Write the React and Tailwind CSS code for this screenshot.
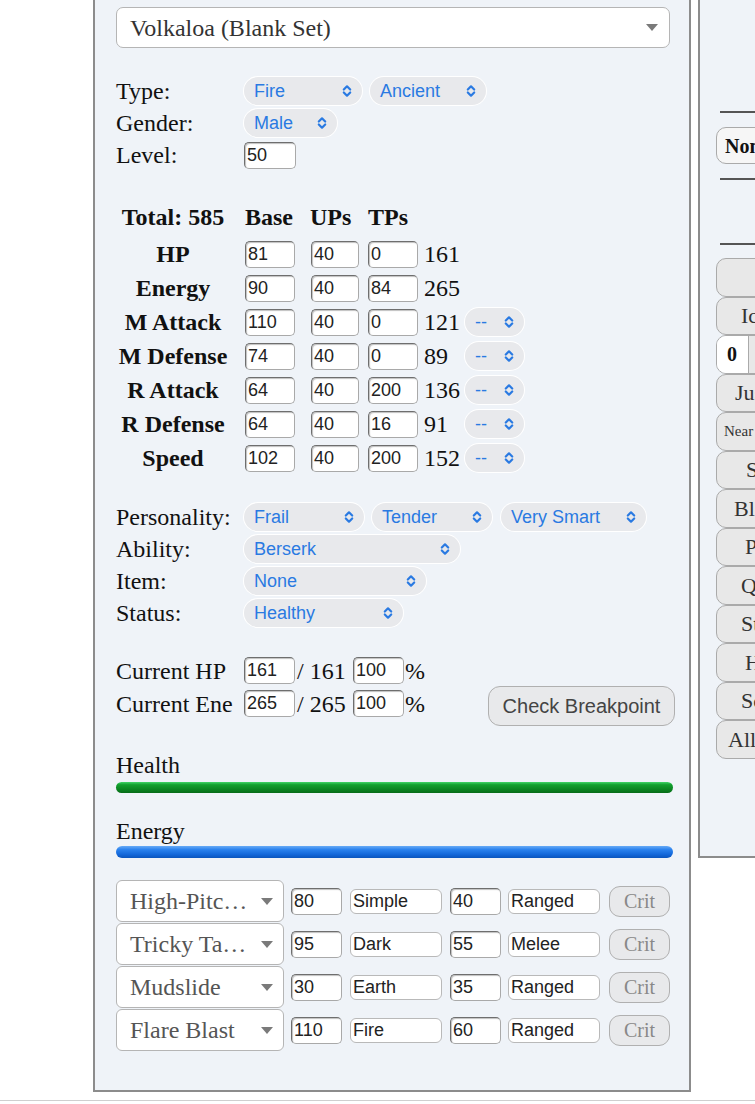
import React from 'react';

// Calculadora: panel del Loomian (izquierda) y panel de campo (derecha, recortado)
const SANS = "font-['Liberation_Sans',Arial,sans-serif]";

function Chev() {
  return (
    <svg width="10" height="14" viewBox="0 0 10 14" fill="none" stroke="#2a7ae2" strokeWidth="2.2" strokeLinecap="round" strokeLinejoin="round">
      <path d="M1.8 5.5 5 2.3 8.2 5.5" />
      <path d="M1.8 8.5 5 11.7 8.2 8.5" />
    </svg>
  );
}

function Pill({ w, children }) {
  return (
    <div className={`${w} h-[28px] shrink-0 rounded-full bg-[#e8e9ec] ring-1 ring-white flex items-center justify-between pl-[10px] pr-[10px] text-[18px] text-[#2a7ae2] ${SANS}`}>
      <span>{children}</span>
      <Chev />
    </div>
  );
}

function Box({ w, v }) {
  return (
    <div className={`${w} h-[27px] shrink-0 bg-white rounded-[5px] border-[1.5px] border-[#6e6e6e] border-r-[#a9a9a9] border-b-[#a9a9a9] shadow-[inset_1px_1px_1px_rgba(0,0,0,0.25)] flex items-center pl-[2px] text-[18px] text-[#222] ${SANS}`}>
      {v}
    </div>
  );
}

function TextBox({ v }) {
  return (
    <div className={`w-[92px] h-[25px] shrink-0 bg-white rounded-[6px] border border-[#b9b9b9] flex items-center pl-[2px] text-[18px] text-[#222] ${SANS}`}>
      {v}
    </div>
  );
}

function Caret() {
  return (
    <svg width="12" height="7" viewBox="0 0 12 7"><path d="M0 0h12L6 7z" fill="#7a7a7a" /></svg>
  );
}

const stats = [
  { n: 'HP', b: 81, u: 40, t: 0, v: 161 },
  { n: 'Energy', b: 90, u: 40, t: 84, v: 265 },
  { n: 'M Attack', b: 110, u: 40, t: 0, v: 121, sel: true },
  { n: 'M Defense', b: 74, u: 40, t: 0, v: 89, sel: true },
  { n: 'R Attack', b: 64, u: 40, t: 200, v: 136, sel: true },
  { n: 'R Defense', b: 64, u: 40, t: 16, v: 91, sel: true },
  { n: 'Speed', b: 102, u: 40, t: 200, v: 152, sel: true },
];

const moves = [
  { n: 'High-Pitc…', bp: 80, tipo: 'Simple', e: 40, cat: 'Ranged' },
  { n: 'Tricky Ta…', bp: 95, tipo: 'Dark', e: 55, cat: 'Melee' },
  { n: 'Mudslide', bp: 30, tipo: 'Earth', e: 35, cat: 'Ranged' },
  { n: 'Flare Blast', bp: 110, tipo: 'Fire', e: 60, cat: 'Ranged' },
];

const campo = [
  { t: '', pl: 'pl-[24px]' },
  { t: 'Ice Wall', pl: 'pl-[24px]' },
  { box: true },
  { t: 'Just Cause', pl: 'pl-[18px]' },
  { t: 'Near Death', pl: 'pl-[7px]', small: true },
  { t: 'Safeguard', pl: 'pl-[29px]' },
  { t: 'Block', pl: 'pl-[17px]' },
  { t: 'Protect', pl: 'pl-[28px]' },
  { t: 'Quick', pl: 'pl-[24px]' },
  { t: 'Stealth', pl: 'pl-[24px]' },
  { t: 'Heal', pl: 'pl-[28px]' },
  { t: 'Screen', pl: 'pl-[24px]' },
  { t: 'Ally', pl: 'pl-[11px]' },
];

export default function App() {
  return (
    <div className="w-[755px] h-[1104px] overflow-hidden bg-white flex flex-col font-['Liberation_Serif',serif] text-[#111]">
      <div className="flex h-[1092px] shrink-0">
        <div className="w-[93px] shrink-0" />

        {/* Panel del Loomian */}
        <div className="w-[598px] shrink-0 h-[1092px] bg-[#eff3f8] border-x-2 border-b-2 border-[#8c8c8c] pl-[21px] pt-[7px]">
          <div className="w-[554px] h-[41px] bg-white rounded-[7px] border border-[#b5b5b5] flex items-center justify-between pl-[13px] pr-[11px] text-[24px] text-[#333]">
            <span>Volkaloa (Blank Set)</span>
            <Caret />
          </div>

          <div className="mt-[27px] text-[24px]">
            <div className="h-[32px] flex items-center">
              <span className="w-[128px] shrink-0">Type:</span>
              <div className="flex gap-[8px]">
                <Pill w="w-[118px]">Fire</Pill>
                <Pill w="w-[116px]">Ancient</Pill>
              </div>
            </div>
            <div className="h-[32px] flex items-center">
              <span className="w-[128px] shrink-0">Gender:</span>
              <Pill w="w-[93px]">Male</Pill>
            </div>
            <div className="h-[32px] flex items-center">
              <span className="w-[128px] shrink-0">Level:</span>
              <Box w="w-[52px]" v="50" />
            </div>
          </div>

          {/* Tabla de stats */}
          <div className="mt-[29px] text-[24px]">
            <div className="h-[34px] flex items-center font-bold">
              <span className="w-[114px] text-center whitespace-nowrap">Total: 585</span>
              <span className="ml-[15px] w-[65px]">Base</span>
              <span className="w-[58px]">UPs</span>
              <span>TPs</span>
            </div>
            <div className="mt-[3px]">
              {stats.map(s => (
                <div key={s.n} className="h-[34px] flex items-center">
                  <span className="w-[114px] shrink-0 text-center font-bold whitespace-nowrap">{s.n}</span>
                  <div className="ml-[15px]"><Box w="w-[50px]" v={s.b} /></div>
                  <div className="ml-[16px]"><Box w="w-[48px]" v={s.u} /></div>
                  <div className="ml-[9px]"><Box w="w-[50px]" v={s.t} /></div>
                  <span className="ml-[6px] w-[41px] shrink-0">{s.v}</span>
                  {s.sel && <Pill w="w-[59px]">--</Pill>}
                </div>
              ))}
            </div>
          </div>

          <div className="mt-[26px] text-[24px]">
            <div className="h-[32px] flex items-center">
              <span className="w-[128px] shrink-0">Personality:</span>
              <div className="flex gap-[8px]">
                <Pill w="w-[120px]">Frail</Pill>
                <Pill w="w-[120px]">Tender</Pill>
                <div className="ml-px"><Pill w="w-[145px]">Very Smart</Pill></div>
              </div>
            </div>
            <div className="h-[32px] flex items-center">
              <span className="w-[128px] shrink-0">Ability:</span>
              <Pill w="w-[216px]">Berserk</Pill>
            </div>
            <div className="h-[32px] flex items-center">
              <span className="w-[128px] shrink-0">Item:</span>
              <Pill w="w-[182px]">None</Pill>
            </div>
            <div className="h-[32px] flex items-center">
              <span className="w-[128px] shrink-0">Status:</span>
              <Pill w="w-[159px]">Healthy</Pill>
            </div>
          </div>

          {/* HP / energía actuales */}
          <div className="mt-[25px] flex text-[24px]">
            <div>
              <div className="h-[33px] flex items-center">
                <span className="w-[128px] shrink-0">Current HP</span>
                <Box w="w-[51px]" v="161" />
                <span className="ml-[2px] w-[56px] shrink-0">/ 161</span>
                <Box w="w-[51px]" v="100" />
                <span className="ml-px">%</span>
              </div>
              <div className="h-[33px] flex items-center">
                <span className="w-[128px] shrink-0">Current Ene</span>
                <Box w="w-[51px]" v="265" />
                <span className="ml-[2px] w-[56px] shrink-0">/ 265</span>
                <Box w="w-[51px]" v="100" />
                <span className="ml-px">%</span>
              </div>
            </div>
            <button className={`ml-[63px] mt-[32px] w-[187px] h-[40px] rounded-[12px] bg-[#e8e9eb] border border-[#b0b0b0] text-[20px] text-[#444] ${SANS}`}>
              Check Breakpoint
            </button>
          </div>

          <div className="mt-[25px] w-[557px] text-[24px]">
            <div className="h-[28px] leading-[28px]">Health</div>
            <div className="mt-[3px] h-[11px] rounded-full bg-[linear-gradient(to_bottom,#41d468_0%,#12a02e_25%,#0a8220_70%,#076b19_100%)]" />
            <div className="mt-[24px] h-[28px] leading-[28px]">Energy</div>
            <div className="mt-px h-[12px] rounded-full bg-[linear-gradient(to_bottom,#67aaf6_0%,#2b82ee_30%,#1468da_70%,#0b55bd_100%)]" />
          </div>

          {/* Movimientos */}
          <div className="mt-[22px] flex flex-col gap-px">
            {moves.map(m => (
              <div key={m.n} className="h-[42px] flex items-center">
                <div className="w-[168px] h-[42px] shrink-0 bg-white rounded-[6px] border border-[#b5b5b5] flex items-center justify-between pl-[13px] pr-[10px] text-[24px] text-[#555] whitespace-nowrap">
                  <span>{m.n}</span>
                  <Caret />
                </div>
                <div className="ml-[7px]"><Box w="w-[51px]" v={m.bp} /></div>
                <div className="ml-[8px]"><TextBox v={m.tipo} /></div>
                <div className="ml-[8px]"><Box w="w-[51px]" v={m.e} /></div>
                <div className="ml-[7px]"><TextBox v={m.cat} /></div>
                <div className="ml-[9px] w-[61px] h-[31px] shrink-0 rounded-[11px] bg-[#e8e9eb] border border-[#b0b0b0] flex items-center justify-center text-[20px] text-[#888]">
                  Crit
                </div>
              </div>
            ))}
          </div>
        </div>

        <div className="w-[7px] shrink-0" />

        {/* Panel de campo */}
        <div className="w-[160px] shrink-0 h-[858px] bg-[#eff3f8] border-l-2 border-b-2 border-[#8c8c8c] pl-[16px] pt-[111px]">
          <div className="ml-[4px] h-[2px] bg-[#555]" />
          <div className="mt-[14px] w-[120px] h-[37px] rounded-[10px] bg-[#f6f6f6] border border-[#aaa] flex items-center pl-[8px] text-[20px] font-bold">
            None
          </div>
          <div className="mt-[14px] ml-[4px] h-[2px] bg-[#555]" />
          <div className="mt-[63px] ml-[4px] h-[2px] bg-[#555]" />
          <div className="mt-[13px]">
            {campo.map((c, i) =>
              c.box ? (
                <div key={i} className="h-[38.5px] flex rounded-[10px] border border-[#aaa] overflow-hidden">
                  <div className="w-[32px] bg-white border-r border-[#aaa] flex items-center pl-[10px] text-[20px] font-bold">0</div>
                  <div className="flex-1 bg-[#e8e8e8]" />
                </div>
              ) : (
                <div key={i} className={`h-[38.5px] rounded-[10px] bg-[#e8e8e8] border border-[#aaa] flex items-center ${c.pl} whitespace-nowrap text-[#333] ${c.small ? 'text-[15px]' : 'text-[22px]'}`}>
                  {c.t}
                </div>
              )
            )}
          </div>
        </div>
      </div>
      <div className="mt-[8px] h-px bg-[#cfcfcf]" />
    </div>
  );
}
